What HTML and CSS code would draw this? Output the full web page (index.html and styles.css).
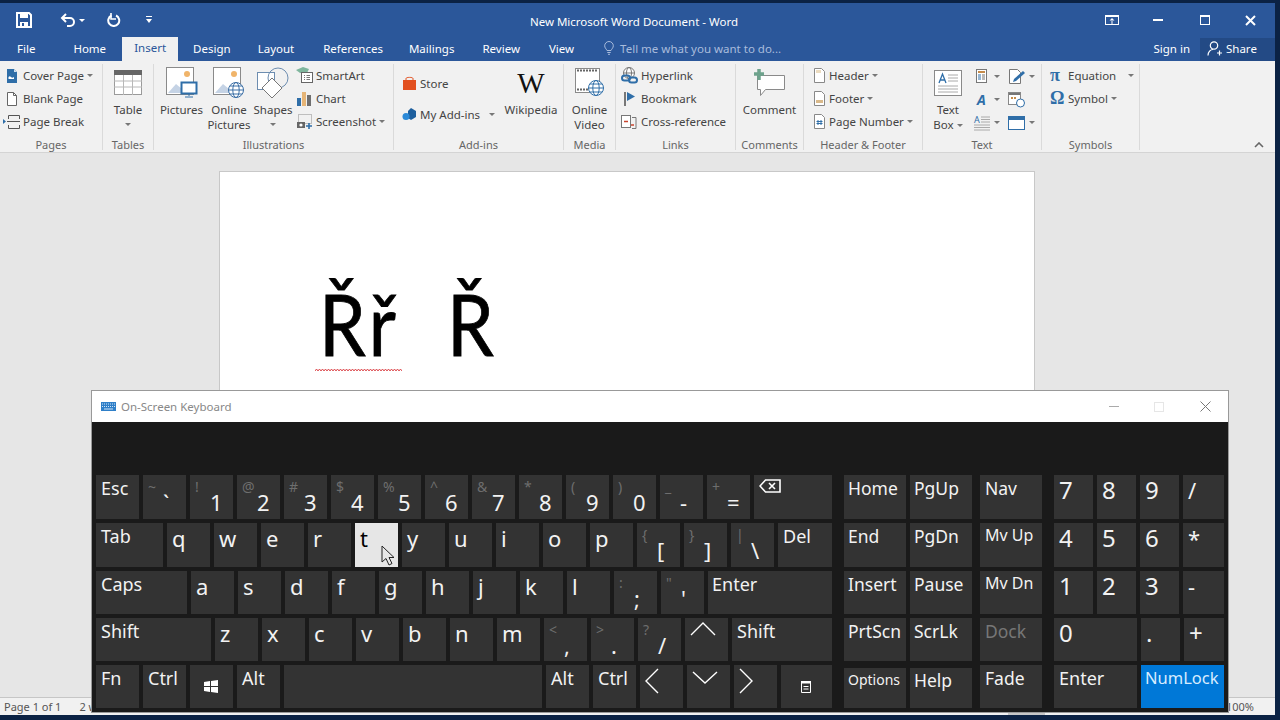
FILE: index.html
```html
<!DOCTYPE html>
<html lang="en">
<head>
    <meta charset="UTF-8">
    <title>New Microsoft Word Document - Word</title>
    <link rel="stylesheet" href="styles.css">
</head>
<body>
<div class="word">
    <!-- title bar -->
    <div class="titlebar">
        <div class="qat">
            <svg class="qat-save" width="16" height="16" viewBox="0 0 16 16"><path d="M1 1h12l2 2v12H1z" fill="none" stroke="#fff" stroke-width="2"/><rect x="4" y="2" width="8" height="4" fill="#fff"/><rect x="4" y="10" width="8" height="5" fill="#fff"/><rect x="6" y="11" width="2" height="3" fill="#2b579a"/></svg>
            <svg class="qat-undo" width="16" height="14" viewBox="0 0 16 14"><path d="M6 1L2 5l4 4M2 5h8a4 4 0 0 1 0 8H7" fill="none" stroke="#fff" stroke-width="2"/></svg>
            <span class="caret white qat-caret"></span>
            <svg class="qat-redo" width="14" height="14" viewBox="0 0 14 14"><path d="M9 2.500a5.500 5.500 0 1 1-4.500 0" fill="none" stroke="#fff" stroke-width="2"/><path d="M4 0v6H9" fill="none" stroke="#fff" stroke-width="1.600"/></svg>
            <svg class="qat-more" width="7" height="8" viewBox="0 0 7 8"><rect y="0" width="6" height="1" fill="#fff"/><path d="M0 3h6L3 7z" fill="#fff"/></svg>
        </div>
        <div class="doc-title">New Microsoft Word Document - Word</div>
        <div class="win-controls">
            <svg class="win-display" width="14" height="10" viewBox="0 0 14 10"><rect x=".5" y=".5" width="13" height="9" fill="none" stroke="#fff"/><rect x="1" y="1" width="12" height="1" fill="#fff"/><path d="M7 3L4.500 5.500h5zM6.500 5h1v4h-1z" fill="#fff"/></svg>
            <svg class="win-min" width="10" height="2" viewBox="0 0 10 2"><rect width="10" height="2" fill="#fff"/></svg>
            <svg class="win-max" width="10" height="10" viewBox="0 0 10 10"><rect x=".5" y=".5" width="9" height="9" fill="none" stroke="#fff"/><rect width="10" height="2" fill="#fff"/></svg>
            <svg class="win-close" width="11" height="11" viewBox="0 0 11 11"><path d="M1 1l9 9M10 1l-9 9" stroke="#fff" stroke-width="2"/></svg>
        </div>
    </div>

    <!-- tabs -->
    <div class="tabs">
        <span class="tab tab-file">File</span>
        <span class="tab tab-home">Home</span>
        <span class="tab tab-active">Insert</span>
        <span class="tab tab-design">Design</span>
        <span class="tab tab-layout">Layout</span>
        <span class="tab tab-refs">References</span>
        <span class="tab tab-mail">Mailings</span>
        <span class="tab tab-review">Review</span>
        <span class="tab tab-view">View</span>
        <svg class="bulb" width="10" height="14" viewBox="0 0 10 14"><path d="M3 9.500C2 7.500.7 6.800.7 4.800a4.300 4.300 0 0 1 8.600 0c0 2-1.300 2.700-2.300 4.700zM3.300 11.500h3.400M4 13.300h2" fill="none" stroke="#a9bcdc"/></svg>
        <span class="tell-me">Tell me what you want to do...</span>
        <span class="sign-in">Sign in</span>
        <span class="share">
            <svg width="16" height="15" viewBox="0 0 16 15"><circle cx="7" cy="4.500" r="3.700" fill="none" stroke="#fff" stroke-width="1.200"/><path d="M1 14.500c0-3.500 2.500-6 5-6M10 12h5M12.500 9.500v5" fill="none" stroke="#fff" stroke-width="1.200"/></svg>
            Share
        </span>
    </div>

    <!-- ribbon -->
    <div class="ribbon">
        <div class="group g-pages">
            <div class="group-body">
                <div class="small-col">
                    <div class="small">
                        <svg class="ico" width="16" height="16" viewBox="0 0 16 16"><path d="M3 1h7l3 3v11H3z" fill="#2f6ea8"/><path d="M10 1l3 3h-3z" fill="#cfe0f0"/><path d="M4.500 9c1-1 1.500-1 2.500 0s1.500 1 3 0v2H4.500z" fill="#fff"/></svg>
                        Cover Page<span class="caret"></span>
                    </div>
                    <div class="small">
                        <svg class="ico" width="16" height="16" viewBox="0 0 16 16"><path d="M3.500 1.500h6l3 3v10h-9z" fill="#fff" stroke="#666"/><path d="M9.500 1.500v3h3" fill="none" stroke="#666"/></svg>
                        Blank Page
                    </div>
                    <div class="small">
                        <svg class="ico ico-break" width="18" height="16" viewBox="0 0 18 16"><path d="M5.500 5V1.500h11V5M5.500 11v3.500h11V11M4 7.500h13" fill="none" stroke="#555"/><path d="M0 5l3 2.500L0 10z" fill="#2f6ea8"/></svg>
                        Page Break
                    </div>
                </div>
            </div>
            <div class="group-label">Pages</div>
        </div>

        <div class="group g-tables">
            <div class="group-body">
                <div class="big big-table">
                    <div class="big-icon">
                        <svg width="28" height="26" viewBox="0 0 28 26"><rect x=".5" y=".5" width="27" height="24" fill="#fff" stroke="#9a9a9a"/><rect width="28" height="5" fill="#666"/><path d="M0 11h28M0 17h28M9.500 5v20M18.500 5v20" stroke="#b8b8b8"/></svg>
                    </div>
                    <div class="big-text">Table</div>
                    <span class="caret caret-big"></span>
                </div>
            </div>
            <div class="group-label">Tables</div>
        </div>

        <div class="group g-illus">
            <div class="group-body">
                <div class="big big-pictures">
                    <div class="big-icon">
                        <svg width="32" height="32" viewBox="0 0 32 32"><rect x=".5" y=".5" width="27" height="27" fill="#fff" stroke="#8a8a8a"/><circle cx="21" cy="7" r="3" fill="#f0b46a"/><path d="M2 26l8-9 6 5v4z" fill="#c5d3e5"/><rect x="15.500" y="15.500" width="15" height="11" fill="#fff" stroke="#2f6ea8" stroke-width="2"/><path d="M23 27v2M19 30h8" stroke="#2f6ea8"/></svg>
                    </div>
                    <div class="big-text">Pictures</div>
                </div>
                <div class="big big-online">
                    <div class="big-icon">
                        <svg width="32" height="32" viewBox="0 0 32 32"><rect x=".5" y=".5" width="27" height="27" fill="#fff" stroke="#8a8a8a"/><circle cx="21" cy="7" r="3" fill="#f0b46a"/><path d="M2 26l8-9 6 5v4z" fill="#c5d3e5"/><circle cx="23" cy="23" r="7.500" fill="#fff" stroke="#3a6ea5"/><ellipse cx="23" cy="23" rx="3.200" ry="7.500" fill="none" stroke="#3a6ea5"/><path d="M15.500 23h15M17 19h12M17 27h12" stroke="#3a6ea5"/></svg>
                    </div>
                    <div class="big-text">Online<br>Pictures</div>
                </div>
                <div class="big big-shapes">
                    <div class="big-icon">
                        <svg width="32" height="32" viewBox="0 0 32 32"><rect x=".5" y="5.500" width="17" height="17" fill="#fff" stroke="#6d8db0"/><circle cx="21" cy="11" r="10" fill="none" stroke="#6d8db0"/><path d="M15 11l10 10-10 10L5 21z" fill="#fff" stroke="#777"/></svg>
                    </div>
                    <div class="big-text">Shapes</div>
                    <span class="caret caret-big"></span>
                </div>
                <div class="small-col col-illus">
                    <div class="small">
                        <svg class="ico" width="17" height="17" viewBox="0 0 17 17"><path d="M0 3l7-3 6 2-2 4H4z" fill="#7fb69d"/><rect x="5.500" y="5.500" width="11" height="10" fill="#fff" stroke="#666"/><path d="M8 8.500h1M8 10.500h1M8 12.500h1M10.500 8.500h3.500M10.500 10.500h3.500M10.500 12.500h3.500" stroke="#777"/></svg>
                        SmartArt
                    </div>
                    <div class="small">
                        <svg class="ico" width="17" height="16" viewBox="0 0 17 16"><rect x="1" y="7" width="4" height="8" fill="#2f6ea8"/><rect x="6" y="1" width="4" height="14" fill="#e6b577"/><rect x="11" y="4" width="4" height="11" fill="#6f6f6f"/></svg>
                        Chart
                    </div>
                    <div class="small">
                        <svg class="ico" width="17" height="16" viewBox="0 0 17 16"><rect x="2.500" y=".5" width="13" height="9" fill="none" stroke="#8a8a8a" stroke-dasharray="1 1"/><rect x="1" y="8" width="8" height="6" fill="#666"/><circle cx="5" cy="11" r="1.600" fill="#fff"/><path d="M10 12h6M13 9v6" stroke="#2f6ea8" stroke-width="1.600"/></svg>
                        Screenshot<span class="caret"></span>
                    </div>
                </div>
            </div>
            <div class="group-label">Illustrations</div>
        </div>

        <div class="group g-addins">
            <div class="group-body">
                <div class="addin-col">
                    <div class="small addin">
                        <svg class="ico" width="15" height="15" viewBox="0 0 15 15"><path d="M1 4h13v10H1z" fill="#e2501f"/><path d="M4 5V2.500C4 1 11 1 11 2.500V5" fill="none" stroke="#e2501f"/></svg>
                        Store
                    </div>
                    <div class="small addin">
                        <svg class="ico" width="15" height="15" viewBox="0 0 15 15"><path d="M9 1l5 3v6l-5 3-3-2V4z" fill="#1d5f9e"/><circle cx="4" cy="9.500" r="3.500" fill="#2b8ad8"/></svg>
                        My Add-ins<span class="caret caret-wide"></span>
                    </div>
                </div>
                <div class="big big-wiki">
                    <div class="big-icon"><span class="wiki-w">W</span></div>
                    <div class="big-text">Wikipedia</div>
                </div>
            </div>
            <div class="group-label">Add-ins</div>
        </div>

        <div class="group g-media">
            <div class="group-body">
                <div class="big big-video">
                    <div class="big-icon">
                        <svg width="30" height="30" viewBox="0 0 30 30"><rect x=".5" y=".5" width="24" height="24" fill="#fff" stroke="#8a8a8a"/><path d="M2 2.500h21M2 21.500h12" stroke="#666" stroke-width="2" stroke-dasharray="2 1"/><circle cx="21" cy="20" r="7.500" fill="#fff" stroke="#2f6ea8"/><ellipse cx="21" cy="20" rx="3.200" ry="7.500" fill="none" stroke="#2f6ea8"/><path d="M13.500 20h15M15 16h12M15 24h12" stroke="#2f6ea8"/></svg>
                    </div>
                    <div class="big-text">Online<br>Video</div>
                </div>
            </div>
            <div class="group-label">Media</div>
        </div>

        <div class="group g-links">
            <div class="group-body">
                <div class="small-col col-links">
                    <div class="small">
                        <svg class="ico" width="17" height="17" viewBox="0 0 17 17"><circle cx="8" cy="6" r="5.500" fill="#fff" stroke="#777"/><ellipse cx="8" cy="6" rx="2.500" ry="5.500" fill="none" stroke="#777"/><path d="M2.500 6h11" stroke="#777"/><rect x="1" y="8.500" width="8" height="5" rx="2.500" fill="none" stroke="#2f6ea8" stroke-width="2"/><rect x="8" y="10.500" width="8" height="5" rx="2.500" fill="none" stroke="#2f6ea8" stroke-width="2"/></svg>
                        Hyperlink
                    </div>
                    <div class="small">
                        <svg class="ico" width="17" height="16" viewBox="0 0 17 16"><rect x="3" y="1" width="2" height="14" fill="#777"/><path d="M6 1l8 4.500L6 10z" fill="#2f6ea8"/></svg>
                        Bookmark
                    </div>
                    <div class="small">
                        <svg class="ico" width="17" height="16" viewBox="0 0 17 16"><rect x=".5" y="1.500" width="9" height="12" fill="#fff" stroke="#777"/><path d="M3 7.500h4" stroke="#c9442e" stroke-width="1.500"/><path d="M11 3.500h4v11h-4" fill="none" stroke="#777"/><path d="M10 11h3" stroke="#c9442e" stroke-width="1.500"/></svg>
                        Cross-reference
                    </div>
                </div>
            </div>
            <div class="group-label">Links</div>
        </div>

        <div class="group g-comments">
            <div class="group-body">
                <div class="big big-comment">
                    <div class="big-icon">
                        <svg width="32" height="28" viewBox="0 0 32 28"><path d="M3.500 6.500h27v14h-19l-5 6v-6h-3z" fill="#fff" stroke="#8a8a8a"/><path d="M0 5h10M5 0v11" stroke="#6da28c" stroke-width="3.500"/></svg>
                    </div>
                    <div class="big-text">Comment</div>
                </div>
            </div>
            <div class="group-label">Comments</div>
        </div>

        <div class="group g-hf">
            <div class="group-body">
                <div class="small-col col-hf">
                    <div class="small">
                        <svg class="ico" width="13" height="15" viewBox="0 0 13 15"><path d="M1.500 .5h7l3 3v11h-10z" fill="#fff" stroke="#888"/><rect x="3" y="2" width="5" height="3" fill="#ecdcc0"/></svg>
                        Header<span class="caret"></span>
                    </div>
                    <div class="small">
                        <svg class="ico" width="13" height="15" viewBox="0 0 13 15"><path d="M1.500 .5h7l3 3v11h-10z" fill="#fff" stroke="#888"/><rect x="3" y="9" width="7" height="3" fill="#d9b98a"/></svg>
                        Footer<span class="caret"></span>
                    </div>
                    <div class="small">
                        <svg class="ico" width="13" height="15" viewBox="0 0 13 15"><path d="M1.500 .5h7l3 3v11h-10z" fill="#fff" stroke="#888"/><path d="M5 6v5M8 6v5M3.500 7.500h6M3.500 9.500h6" stroke="#2f6ea8"/></svg>
                        Page Number<span class="caret"></span>
                    </div>
                </div>
            </div>
            <div class="group-label">Header &amp; Footer</div>
        </div>

        <div class="group g-text">
            <div class="group-body">
                <div class="big big-textbox">
                    <div class="big-icon">
                        <svg width="28" height="26" viewBox="0 0 28 26"><rect x=".5" y=".5" width="27" height="25" fill="#fff" stroke="#8a8a8a"/><path d="M5 13l3.500-9L12 13M6 10h5" fill="none" stroke="#2f6ea8" stroke-width="1.300"/><path d="M14 5h10M14 8h10M14 11h10M4 16h20M4 19h20M4 22h20" stroke="#aaa"/></svg>
                    </div>
                    <div class="big-text">Text<br>Box<span class="caret"></span></div>
                </div>
                <div class="text-tools">
                    <div class="tool-row">
                        <svg width="17" height="16" viewBox="0 0 17 16"><rect x="2.500" y=".5" width="10" height="13" fill="#fff" stroke="#777"/><rect x="4" y="2" width="7" height="2" fill="#c58b4a"/><path d="M4 6h3M4 8h3M4 10h3" stroke="#2f6ea8"/><path d="M8 6h3M8 8h3M8 10h3" stroke="#777"/></svg>
                        <span class="caret"></span>
                        <svg class="tool-gap" width="18" height="16" viewBox="0 0 18 16"><path d="M1.500 .5h8l3 3v11h-11z" fill="#fff" stroke="#777"/><path d="M6 10l9-8 2 2-9 8-3 1z" fill="#2f6ea8"/></svg>
                        <span class="caret"></span>
                    </div>
                    <div class="tool-row">
                        <span class="wordart-a">A</span>
                        <span class="caret"></span>
                        <svg class="tool-gap" width="18" height="16" viewBox="0 0 18 16"><rect x=".5" y=".5" width="12" height="12" fill="#fff" stroke="#888"/><rect x="1" y="1" width="11" height="2" fill="#777"/><rect x="3" y="5" width="2" height="2" fill="#c58b4a"/><rect x="6" y="5" width="2" height="2" fill="#c58b4a"/><circle cx="12.500" cy="11" r="4" fill="#fff" stroke="#2f6ea8"/></svg>
                    </div>
                    <div class="tool-row">
                        <span class="dropcap">
                            <span class="dropcap-a">A</span>
                            <svg width="17" height="16" viewBox="0 0 17 16"><path d="M7 2h9M7 4.500h9M7 7h9M0 10h16M0 12.500h16M0 15h16" stroke="#aaa"/></svg>
                        </span>
                        <span class="caret"></span>
                        <svg class="tool-gap" width="18" height="14" viewBox="0 0 18 14"><rect x=".5" y=".5" width="16" height="13" fill="#fff" stroke="#2f6ea8"/><rect width="17" height="4" fill="#2f6ea8"/></svg>
                        <span class="caret"></span>
                    </div>
                </div>
            </div>
            <div class="group-label">Text</div>
        </div>

        <div class="group g-symbols">
            <div class="group-body">
                <div class="small-col col-sym">
                    <div class="small"><span class="sym-ico">π</span>Equation<span class="caret caret-far"></span></div>
                    <div class="small"><span class="sym-ico">Ω</span>Symbol<span class="caret"></span></div>
                </div>
            </div>
            <div class="group-label">Symbols</div>
        </div>

        <svg class="collapse" width="10" height="6" viewBox="0 0 10 6"><path d="M1 5l4-4 4 4" fill="none" stroke="#666" stroke-width="1.600"/></svg>
    </div>

    <!-- document -->
    <div class="doc-area">
        <div class="page">
            <div class="page-text">Řř&nbsp; Ř</div>
            <svg class="squiggle" width="87" height="4" viewBox="0 0 87 4"><defs><pattern id="zig" width="3" height="4" patternUnits="userSpaceOnUse"><path d="M0 3l1.500-2L3 3" fill="none" stroke="#d8383c" stroke-width=".9"/></pattern></defs><rect width="87" height="4" fill="url(#zig)"/></svg>
        </div>
    </div>

    <div class="statusbar">
        <span class="status-page">Page 1 of 1</span>
        <span class="status-words">2 words</span>
        <span class="status-view"></span>
        <span class="status-zoom">100%</span>
    </div>
</div>

<!-- on-screen keyboard window -->
<div class="osk">
    <div class="osk-title">
        <svg width="15" height="9" viewBox="0 0 15 9"><rect width="15" height="9" fill="#2f7fc8"/><path d="M1 2h13M1 4.500h13" stroke="#cfe4f7" stroke-dasharray="1 1"/><path d="M3 7h9" stroke="#cfe4f7"/></svg>
        <span class="osk-name">On-Screen Keyboard</span>
        <svg class="osk-min" width="10" height="1" viewBox="0 0 10 1"><rect width="10" height="1" fill="#aaa"/></svg>
        <svg class="osk-max" width="10" height="10" viewBox="0 0 10 10"><rect x=".5" y=".5" width="9" height="9" fill="none" stroke="#e6e6e6"/></svg>
        <svg class="osk-close" width="11" height="11" viewBox="0 0 11 11"><path d="M.5.500l10 10M10.500.500l-10 10" stroke="#777"/></svg>
    </div>
    <div class="osk-spacer"></div>
    <div class="keys">
        <div class="kb-block kb-main">
            <div class="kb-row">
                <div class="key">Esc</div>
                <div class="key dual"><span class="sym">~</span><span class="low">`</span></div>
                <div class="key dual"><span class="sym">!</span><span class="low">1</span></div>
                <div class="key dual"><span class="sym">@</span><span class="low">2</span></div>
                <div class="key dual"><span class="sym">#</span><span class="low">3</span></div>
                <div class="key dual"><span class="sym">$</span><span class="low">4</span></div>
                <div class="key dual"><span class="sym">%</span><span class="low">5</span></div>
                <div class="key dual"><span class="sym">^</span><span class="low">6</span></div>
                <div class="key dual"><span class="sym">&amp;</span><span class="low">7</span></div>
                <div class="key dual"><span class="sym">*</span><span class="low">8</span></div>
                <div class="key dual"><span class="sym">(</span><span class="low">9</span></div>
                <div class="key dual"><span class="sym">)</span><span class="low">0</span></div>
                <div class="key dual"><span class="sym">_</span><span class="low">-</span></div>
                <div class="key dual"><span class="sym">+</span><span class="low">=</span></div>
                <div class="key w-bksp"><svg class="bksp" width="22" height="14" viewBox="0 0 22 14"><path d="M6.500 1H21v12H6.500L1 7z" fill="none" stroke="#fff" stroke-width="1.600"/><path d="M10 4l6 6M16 4l-6 6" stroke="#fff" stroke-width="1.600"/></svg></div>
            </div>
            <div class="kb-row">
                <div class="key w-tab">Tab</div>
                <div class="key letter">q</div>
                <div class="key letter">w</div>
                <div class="key letter">e</div>
                <div class="key letter">r</div>
                <div class="key letter pressed">t</div>
                <div class="key letter">y</div>
                <div class="key letter">u</div>
                <div class="key letter">i</div>
                <div class="key letter">o</div>
                <div class="key letter">p</div>
                <div class="key dual"><span class="sym">{</span><span class="low">[</span></div>
                <div class="key dual"><span class="sym">}</span><span class="low">]</span></div>
                <div class="key dual"><span class="sym">|</span><span class="low">\</span></div>
                <div class="key w-del">Del</div>
            </div>
            <div class="kb-row">
                <div class="key w-caps">Caps</div>
                <div class="key letter">a</div>
                <div class="key letter">s</div>
                <div class="key letter">d</div>
                <div class="key letter">f</div>
                <div class="key letter">g</div>
                <div class="key letter">h</div>
                <div class="key letter">j</div>
                <div class="key letter">k</div>
                <div class="key letter">l</div>
                <div class="key dual"><span class="sym">:</span><span class="low">;</span></div>
                <div class="key dual"><span class="sym">"</span><span class="low">'</span></div>
                <div class="key w-enter">Enter</div>
            </div>
            <div class="kb-row">
                <div class="key w-lshift">Shift</div>
                <div class="key letter">z</div>
                <div class="key letter">x</div>
                <div class="key letter">c</div>
                <div class="key letter">v</div>
                <div class="key letter">b</div>
                <div class="key letter">n</div>
                <div class="key letter">m</div>
                <div class="key dual"><span class="sym">&lt;</span><span class="low">,</span></div>
                <div class="key dual"><span class="sym">&gt;</span><span class="low">.</span></div>
                <div class="key dual"><span class="sym">?</span><span class="low">/</span></div>
                <div class="key"><svg class="arrow-up" width="26" height="14" viewBox="0 0 26 14"><path d="M1 13L13 1l12 12" fill="none" stroke="#fff" stroke-width="1.400"/></svg></div>
                <div class="key w-rshift">Shift</div>
            </div>
            <div class="kb-row">
                <div class="key">Fn</div>
                <div class="key">Ctrl</div>
                <div class="key icon-key"><svg class="win-logo" width="14" height="13" viewBox="0 0 14 13"><path d="M0 2l6-1v5H0zM7 1l7-1v6H7zM0 7h6v5l-6-1zM7 7h7v6l-7-1z" fill="#fff"/></svg></div>
                <div class="key">Alt</div>
                <div class="key w-space"></div>
                <div class="key">Alt</div>
                <div class="key">Ctrl</div>
                <div class="key"><svg class="chevron" width="14" height="26" viewBox="0 0 14 26"><path d="M13 1L1 13l12 12" fill="none" stroke="#fff" stroke-width="1.400"/></svg></div>
                <div class="key"><svg class="arrow-down" width="26" height="13" viewBox="0 0 26 13"><path d="M1 1l12 11L25 1" fill="none" stroke="#fff" stroke-width="1.400"/></svg></div>
                <div class="key"><svg class="chevron" width="14" height="26" viewBox="0 0 14 26"><path d="M1 1l12 12L1 25" fill="none" stroke="#fff" stroke-width="1.400"/></svg></div>
                <div class="key icon-key w-menu"><svg class="menu-ico" width="10" height="12" viewBox="0 0 10 12"><path d="M.5.500h9v11h-9z" fill="none" stroke="#fff"/><rect width="10" height="2.500" fill="#fff"/><path d="M2.500 5.500h5M2.500 8h5" stroke="#fff"/></svg></div>
            </div>
        </div>

        <div class="kb-block kb-nav">
            <div class="kb-row"><div class="key w-nav">Home</div><div class="key w-nav">PgUp</div><div class="key w-nav nav-last">Nav</div></div>
            <div class="kb-row"><div class="key w-nav">End</div><div class="key w-nav">PgDn</div><div class="key w-nav nav-last key-tiny">Mv Up</div></div>
            <div class="kb-row"><div class="key w-nav">Insert</div><div class="key w-nav">Pause</div><div class="key w-nav nav-last key-tiny">Mv Dn</div></div>
            <div class="kb-row"><div class="key w-nav">PrtScn</div><div class="key w-nav">ScrLk</div><div class="key w-nav nav-last key-dim">Dock</div></div>
            <div class="kb-row"><div class="key w-nav short key-options">Options</div><div class="key w-nav short">Help</div><div class="key w-nav nav-last">Fade</div></div>
        </div>

        <div class="kb-block kb-num">
            <div class="kb-row"><div class="key num">7</div><div class="key num">8</div><div class="key num">9</div><div class="key num w-num-end">/</div></div>
            <div class="kb-row"><div class="key num">4</div><div class="key num">5</div><div class="key num">6</div><div class="key num w-num-end">*</div></div>
            <div class="kb-row"><div class="key num">1</div><div class="key num">2</div><div class="key num">3</div><div class="key num w-num-end">-</div></div>
            <div class="kb-row"><div class="key num w-num-wide">0</div><div class="key num">.</div><div class="key num w-plus">+</div></div>
            <div class="kb-row"><div class="key w-num-wide">Enter</div><div class="key w-num-wide numlock">NumLock</div></div>
        </div>
    </div>
    <svg class="cursor" width="14" height="21" viewBox="0 0 14 21"><path d="M1 1v16l4-3.500L8 20l3-1.500-3-6h5z" fill="#e8e8e8" stroke="#222"/></svg>
</div>
</body>
</html>
```

FILE: styles.css
```css
* {
    box-sizing: border-box;
}
body {
    margin: 0;
    width: 1280px;
    height: 720px;
    overflow: hidden;
    position: relative;
    background-color: #0b2244;
    font-family: "Noto Sans", "Open Sans", sans-serif;
    font-size: 12px;
    color: #444;
}
.word {
    margin-top: 3px;
    width: 1275px;
    height: 712px;
    display: flex;
    flex-direction: column;
    background-color: #e6e6e6;
}

/* title bar */
.titlebar {
    height: 34px;
    flex: none;
    background-color: #2b579a;
    color: #fff;
    display: flex;
    align-items: center;
    position: relative;
}
.qat {
    display: flex;
    align-items: center;
    width: 500px;
    padding-left: 16px;
}
.qat-undo {
    margin-left: 28px;
}
.qat-caret {
    margin-left: 8px;
}
.qat-redo {
    margin-left: 22px;
}
.qat-more {
    margin-left: 25px;
}
.doc-title {
    width: 268px;
    text-align: center;
    font-size: 11.5px;
    padding-top: 2px;
}
.win-controls {
    margin-left: auto;
    display: flex;
    align-items: center;
    padding-right: 19px;
}
.win-min {
    margin-left: 34px;
}
.win-max {
    margin-left: 37px;
}
.win-close {
    margin-left: 35px;
}

/* tabs */
.tabs {
    height: 24px;
    flex: none;
    background-color: #2b579a;
    color: #fff;
    display: flex;
    align-items: center;
    font-size: 11.5px;
}
.tab {
    flex: none;
    margin-top: -2px;
}
.tab-file {
    margin-left: 17px;
}
.tab-home {
    margin-left: 38px;
}
.tab-active {
    margin-left: 16px;
    margin-top: 0;
    width: 56px;
    height: 24px;
    line-height: 22px;
    text-align: center;
    background-color: #f1f1f1;
    color: #2b579a;
}
.tab-design {
    margin-left: 15px;
}
.tab-layout {
    margin-left: 27px;
}
.tab-refs {
    margin-left: 29px;
}
.tab-mail {
    margin-left: 26px;
}
.tab-review {
    margin-left: 28px;
}
.tab-view {
    margin-left: 29px;
}
.bulb {
    margin-left: 30px;
    margin-top: -2px;
    flex: none;
}
.tell-me {
    margin-left: 6px;
    margin-top: -2px;
    color: #a9bcdc;
}
.sign-in {
    margin-left: auto;
    margin-top: -2px;
}
.share {
    margin-left: 10px;
    width: 75px;
    height: 23px;
    background-color: #234a85;
    display: flex;
    align-items: center;
    gap: 3px;
    padding-left: 7px;
    padding-bottom: 2px;
}

/* ribbon */
.ribbon {
    height: 92px;
    flex: none;
    background-color: #f1f1f1;
    border-bottom: 1px solid #d4d4d4;
    display: flex;
    padding-top: 3px;
    font-size: 11.5px;
}
.group {
    flex: none;
    height: 86px;
    display: flex;
    flex-direction: column;
    border-right: 1px solid #dadada;
}
.group-body {
    height: 75px;
    flex: none;
    display: flex;
}
.group-label {
    flex: none;
    text-align: center;
    font-size: 11px;
    line-height: 14px;
    color: #666;
    margin-top: -1px;
}
.g-pages { width: 103px; }
.g-tables { width: 51px; }
.g-illus { width: 240px; }
.g-addins { width: 170px; }
.g-media { width: 52px; }
.g-links { width: 120px; }
.g-comments { width: 68px; }
.g-hf { width: 119px; }
.g-text { width: 119px; }
.g-symbols { width: 98px; }

.small-col {
    display: flex;
    flex-direction: column;
    padding-left: 4px;
}
.small {
    height: 23px;
    display: flex;
    align-items: center;
    white-space: nowrap;
}
.ico {
    flex: none;
    margin-right: 3px;
}
.ico-break {
    margin-left: -1px;
    margin-right: 2px;
}
.col-illus {
    padding-left: 2px;
}
.col-links {
    padding-left: 5px;
}
.col-hf {
    padding-left: 9px;
}
.col-sym {
    padding-left: 8px;
}
.big {
    display: flex;
    flex-direction: column;
    align-items: center;
    flex: none;
    text-align: center;
    line-height: 15px;
}
.big-icon {
    height: 38px;
    display: flex;
    align-items: center;
    justify-content: center;
}
.big-table { width: 50px; }
.big-pictures { width: 49px; margin-left: 3px; }
.big-online { width: 46px; }
.big-shapes { width: 42px; }
.big-wiki { width: 62px; margin-left: -2px; }
.big-video { width: 51px; }
.big-comment { width: 67px; }
.big-textbox { width: 48px; margin-left: 1px; }
.wiki-w {
    font-family: "Liberation Serif", serif;
    font-size: 29px;
    color: #111;
}
.addin-col {
    width: 108px;
    padding-left: 8px;
    padding-top: 8px;
}
.addin {
    height: 23px;
    margin-bottom: 8px;
}
.addin svg {
    margin-right: 3px;
}
.text-tools {
    display: flex;
    flex-direction: column;
    padding-top: 1px;
    padding-left: 2px;
}
.tool-row {
    height: 23px;
    display: flex;
    align-items: center;
}
.tool-gap {
    margin-left: 8px;
}
.wordart-a {
    width: 17px;
    padding-left: 3px;
    font-size: 14px;
    font-weight: 700;
    font-style: italic;
    color: #2f6ea8;
}
.dropcap {
    width: 17px;
    height: 16px;
    display: block;
    position: relative;
}
.dropcap-a {
    position: absolute;
    left: 0;
    top: 0;
    font-size: 9px;
    line-height: 10px;
    color: #2f6ea8;
}
.sym-ico {
    width: 18px;
    flex: none;
    font-family: "Liberation Serif", serif;
    font-size: 18px;
    font-weight: 700;
    color: #2f6ea8;
}
.caret {
    display: inline-block;
    width: 0;
    height: 0;
    margin-left: 3px;
    border-left: 3px solid transparent;
    border-right: 3px solid transparent;
    border-top: 3px solid #777;
    flex: none;
}
.caret.white {
    border-top-color: #fff;
}
.caret-big {
    margin: 6px 0 0;
}
.caret-wide {
    margin-left: 9px;
}
.caret-far {
    margin-left: 12px;
}
.big-text .caret {
    vertical-align: middle;
}
.collapse {
    margin: 78px 0 0 114px;
    flex: none;
}

/* document */
.doc-area {
    flex: 1;
    min-height: 0;
    overflow: hidden;
    padding: 18px 0 0 219px;
}
.page {
    width: 816px;
    height: 700px;
    background-color: #fff;
    border: 1px solid #c8c8c8;
    padding-top: 95px;
    padding-left: 99px;
}
.page-text {
    font-family: Lato, "Noto Sans", sans-serif;
    font-size: 85px;
    line-height: 112px;
    color: #000;
    letter-spacing: 4px;
    word-spacing: 2px;
    -webkit-text-stroke: 0.8px #000;
    white-space: nowrap;
    transform: scaleX(0.88);
    transform-origin: left;
}
.squiggle {
    display: block;
    margin: -11px 0 0 -4px;
}
.statusbar {
    height: 18px;
    flex: none;
    background-color: #f1f1f1;
    border-top: 1px solid #c6c6c6;
    display: flex;
    align-items: center;
    font-size: 11px;
    color: #555;
}
.status-page {
    margin-left: 4px;
}
.status-words {
    margin-left: 18px;
}
.status-view {
    margin-left: auto;
    width: 37px;
    height: 16px;
    background-color: #c8c8c8;
}
.status-zoom {
    margin-left: 181px;
    margin-right: 21px;
}

/* on-screen keyboard */
.osk {
    position: absolute;
    left: 92px;
    top: 391px;
    width: 1136px;
    height: 321px;
    background-color: #1a1a1a;
    box-shadow: 0 0 0 1px #999;
}
.osk-title {
    height: 31px;
    background-color: #fff;
    display: flex;
    align-items: center;
    padding-left: 9px;
}
.osk-name {
    margin-left: 5px;
    font-size: 11.5px;
    color: #888;
}
.osk-min {
    margin-left: auto;
}
.osk-max {
    margin-left: 35px;
}
.osk-close {
    margin-left: 36px;
    margin-right: 17px;
}
.osk-spacer {
    height: 53px;
}
.keys {
    display: flex;
    gap: 12px;
    padding-left: 4px;
}
.kb-block {
    display: grid;
    grid-template-rows: 44px 44px 43px 43px 43px;
    row-gap: 4px;
}
.kb-row {
    display: flex;
    gap: 4px;
}
.key {
    flex: none;
    width: 43px;
    background-color: #333;
    color: #f2f2f2;
    font-size: 18px;
    line-height: 26px;
    padding-left: 5px;
    white-space: nowrap;
}
.letter {
    font-size: 22px;
    line-height: 30px;
}
.pressed {
    background-color: #e6e6e6;
    color: #000;
}
.dual {
    display: flex;
    flex-direction: column;
    padding-top: 2px;
}
.sym {
    font-size: 14px;
    line-height: 20px;
    color: #6e6e6e;
}
.low {
    font-size: 22px;
    line-height: 24px;
    margin-top: -7px;
    margin-left: 15px;
}
.w-bksp { width: 78px; }
.w-tab { width: 67px; }
.w-del { width: 54px; }
.w-caps { width: 91px; }
.w-enter { width: 124px; padding-left: 4px; }
.w-lshift { width: 115px; }
.w-rshift { width: 100px; }
.w-space { width: 258px; }
.w-menu { width: 51px; }
.bksp {
    display: block;
    margin-top: 4px;
}
.arrow-up {
    display: block;
    margin-top: 4px;
}
.arrow-down {
    display: block;
    margin-top: 6px;
}
.chevron {
    display: block;
    margin-top: 3px;
}
.icon-key {
    display: flex;
    align-items: center;
}
.win-logo {
    margin-left: 9px;
}
.menu-ico {
    margin-left: 15px;
}
.w-nav { width: 62px; font-size: 17.5px; padding-left: 4px; }
.nav-last { margin-left: 4px; padding-left: 5px; }
.key-tiny { font-size: 16px; line-height: 24px; }
.key-options { font-size: 14px; line-height: 24px; }
.key-dim { color: #777; }
.short {
    margin-top: 3px;
    line-height: 24px;
}
.num {
    width: 39px;
    font-size: 24px;
    line-height: 30px;
    padding-left: 5px;
}
.w-num-end { width: 41px; font-size: 22px; }
.w-num-wide { width: 83px; }
.w-plus { width: 40px; font-size: 24px; }
.numlock {
    background-color: #0078d7;
    color: #d8ecff;
    padding-left: 4px;
    font-size: 16.5px;
}
.cursor {
    position: absolute;
    left: 289px;
    top: 154px;
}
```
